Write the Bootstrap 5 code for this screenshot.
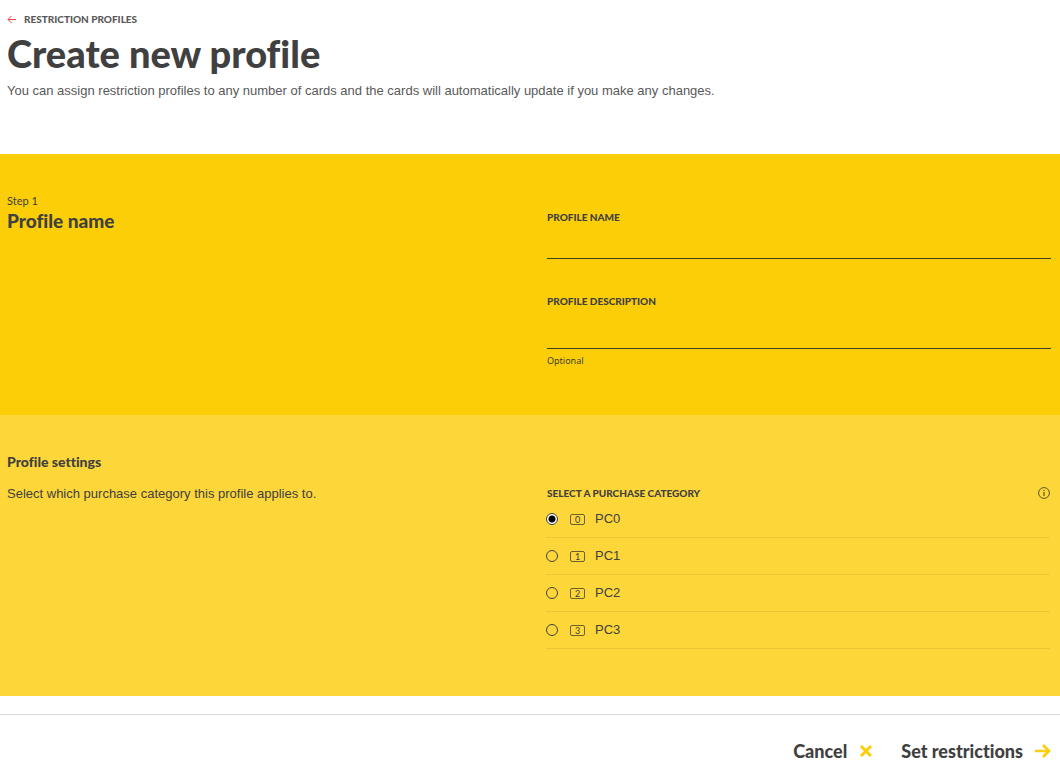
<!DOCTYPE html>
<html lang="en">
<head>
<meta charset="utf-8">
<meta name="viewport" content="width=device-width, initial-scale=1">
<title>Create new profile</title>
<link rel="stylesheet" href="https://cdn.jsdelivr.net/npm/bootstrap@5.3.0/dist/css/bootstrap.min.css">
<style>
  body { font-family: "Liberation Sans", Arial, sans-serif; font-size: 13px; line-height: 20px; color: #404040; background: #fff; }
  .display-face { font-family: Lato, "Open Sans", sans-serif; font-weight: 900; font-variant-ligatures: none; }
  .gutters { padding-left: 7px; padding-right: 9px; }
  .page-head { padding-top: 11px; padding-bottom: 53px; color: #595959; }
  .caption { font-size: 10px; line-height: 16px; color: #404040; }
  .back-link { gap: 8px; color: #595959; }
  .page-title { font-size: 38px; line-height: 52px; padding-bottom: 2px; color: #404040; }
  .split { --bs-gutter-x: 36px; }
  .panel-strong { background: #fbce07; padding-top: 38px; padding-bottom: 44px; }
  .panel-soft { background: #fdd73a; padding-top: 36px; padding-bottom: 47px; }
  .step { font-family: Lato, sans-serif; font-size: 11px; line-height: 18px; }
  .section-title { font-size: 19px; line-height: 22px; }
  .settings-title { font-size: 14px; line-height: 21px; }
  .fields { padding-top: 17px; }
  .line-input { height: 34px; padding: 4px 0; border: 0; border-bottom: 1px solid #404020; border-radius: 0; background: transparent; font-size: 13px; }
  .line-input:focus { background: transparent; border-color: #404020; box-shadow: 0 1px 0 #404020; }
  .second-field { padding-top: 34px; }
  .second-field .line-input { height: 40px; }
  .hint { font-family: "Noto Sans", sans-serif; font-size: 9px; line-height: 20px; padding-top: 2px; }
  .choices { padding-top: 30px; }
  .choice { height: 37px; border-bottom: 1px solid #e8c634; margin-left: -1px; margin-right: 1px; }
  .choice label { gap: 12px; }
  .choice input { appearance: none; width: 12px; height: 12px; margin: 0; border: 1px solid #404040; border-radius: 50%; }
  .choice input:checked { background: radial-gradient(circle, #000 0 3px, #fff 4px); }
  .choice-name { padding-left: 10px; }
  .key { width: 15px; height: 11px; border: 1px solid #6b602f; border-radius: 2px; font: 9px/9px Lato, sans-serif; text-align: center; }
  .info { width: 12px; height: 12px; margin-right: 1px; color: #5b542f; }
  .page-foot { margin-top: 18px; border-top: 1px solid #d9d9d9; padding-top: 22px; padding-bottom: 4px; gap: 28px; }
  .action { font-size: 18px; line-height: 28px; color: #404040; gap: 12px; }
</style>
</head>
<body>
<header class="page-head gutters">
  <nav class="d-flex" aria-label="Breadcrumb">
    <a href="#" class="back-link caption display-face d-flex align-items-center text-decoration-none text-uppercase">
      <svg width="9" height="9" viewBox="0 0 9 9" fill="none" stroke="#e8444f" aria-hidden="true"><path d="M9 4.5H1M4.5 1 1 4.5 4.5 8"/></svg>
      Restriction profiles
    </a>
  </nav>
  <h1 class="page-title display-face m-0">Create new profile</h1>
  <p class="m-0">You can assign restriction profiles to any number of cards and the cards will automatically update if you make any changes.</p>
</header>
<main>
  <section class="panel-strong gutters overflow-hidden">
    <div class="row split">
      <div class="col-6">
        <div class="step">Step 1</div>
        <h2 class="section-title display-face m-0">Profile name</h2>
      </div>
      <div class="col-6">
        <div class="fields">
          <label for="name" class="caption display-face text-uppercase d-block">Profile name</label>
          <input id="name" type="text" class="form-control line-input">
        </div>
        <div class="second-field">
          <label for="description" class="caption display-face text-uppercase d-block">Profile description</label>
          <input id="description" type="text" class="form-control line-input" aria-describedby="hint">
          <div id="hint" class="hint">Optional</div>
        </div>
      </div>
    </div>
  </section>
  <section class="panel-soft gutters overflow-hidden">
    <div class="row split">
      <div class="col-6">
        <h2 class="settings-title display-face mb-2">Profile settings</h2>
        <p class="m-0 pt-1">Select which purchase category this profile applies to.</p>
      </div>
      <fieldset class="col-6 choices">
        <div class="d-flex justify-content-between align-items-center mt-1">
          <legend class="caption display-face text-uppercase m-0 w-auto">Select a purchase category</legend>
          <button type="button" class="btn p-0 border-0 d-flex info" aria-label="Information"><svg width="12" height="12" viewBox="0 0 12 12" fill="none" stroke="currentColor" aria-hidden="true"><circle cx="6" cy="6" r="5.4"/><path d="M6 5v4M6 3v1" stroke-width="1.2"/></svg></button>
        </div>
        <div class="choice d-flex"><label class="d-flex align-items-center"><input type="radio" name="category" checked><span class="d-flex align-items-center"><span class="key">0</span><span class="choice-name">PC0</span></span></label></div>
        <div class="choice d-flex"><label class="d-flex align-items-center"><input type="radio" name="category"><span class="d-flex align-items-center"><span class="key">1</span><span class="choice-name">PC1</span></span></label></div>
        <div class="choice d-flex"><label class="d-flex align-items-center"><input type="radio" name="category"><span class="d-flex align-items-center"><span class="key">2</span><span class="choice-name">PC2</span></span></label></div>
        <div class="choice d-flex"><label class="d-flex align-items-center"><input type="radio" name="category"><span class="d-flex align-items-center"><span class="key">3</span><span class="choice-name">PC3</span></span></label></div>
      </fieldset>
    </div>
  </section>
</main>
<footer class="page-foot gutters d-flex justify-content-end">
  <button type="button" class="btn action display-face border-0 p-0 d-flex align-items-center">Cancel
    <svg width="14" height="14" viewBox="0 0 14 14" fill="none" stroke="#fbce07" stroke-width="3" aria-hidden="true"><path d="m2 2 10 10M12 2 2 12"/></svg></button>
  <button type="button" class="btn action display-face border-0 p-0 d-flex align-items-center">Set restrictions
    <svg width="16" height="14" viewBox="0 0 16 14" fill="none" stroke="#fbce07" stroke-width="2.6" aria-hidden="true"><path d="M0 7h14M8 1l6 6-6 6"/></svg></button>
</footer>
<script src="https://cdn.jsdelivr.net/npm/bootstrap@5.3.0/dist/js/bootstrap.bundle.min.js"></script>
</body>
</html>
